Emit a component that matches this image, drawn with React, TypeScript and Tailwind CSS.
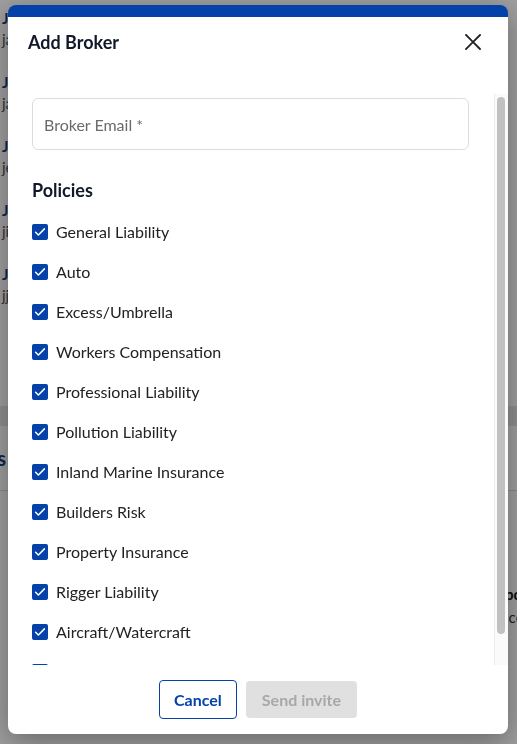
import { useState } from "react"

const policies = [
  "General Liability",
  "Auto",
  "Excess/Umbrella",
  "Workers Compensation",
  "Professional Liability",
  "Pollution Liability",
  "Inland Marine Insurance",
  "Builders Risk",
  "Property Insurance",
  "Rigger Liability",
  "Aircraft/Watercraft",
  "Other",
]

const contacts = [
  { name: "Jane Cooper", email: "jane@acme.com" },
  { name: "Jacob Jones", email: "jacob@acme.com" },
  { name: "Jenny Wilson", email: "jenny@acme.com" },
  { name: "Jim Parker", email: "jim@acme.com" },
  { name: "Jill Adams", email: "jjill@acme.com" },
]

function Check() {
  return (
    <svg width="16" height="16" viewBox="0 0 16 16" fill="none">
      <path d="M3.6 8.3l2.8 2.7 6-6.1" stroke="white" strokeWidth="1.5" strokeLinecap="round" strokeLinejoin="round" />
    </svg>
  )
}

export default function App() {
  const [checked, setChecked] = useState<boolean[]>(policies.map(() => true))

  return (
    <div className="relative min-h-screen h-[744px] overflow-hidden bg-white font-['Lato',sans-serif]">
      {/* Page behind the modal */}
      <div className="flex flex-col pl-[2px] pt-[8px]">
        {contacts.map((c) => (
          <div key={c.name} className="h-[64px] flex flex-col">
            <span className="text-[15px] font-bold text-[#1e3a8a] leading-[20px]">{c.name}</span>
            <span className="text-[15px] text-[#555] leading-[22px]">{c.email}</span>
          </div>
        ))}
      </div>
      <div className="mt-[78px] h-[20px] bg-[#e6e6e6]" />
      <div className="h-[65px] flex items-center border-b border-[#ddd]">
        <div className="w-[6px] overflow-hidden flex justify-end">
          <span className="text-[20px] font-bold text-[#1e3a8a] whitespace-nowrap">Brokers</span>
        </div>
      </div>
      <div className="flex justify-end pt-[92px]">
        <div className="w-[12px] overflow-hidden flex flex-col">
          <span className="text-[15px] font-bold text-[#111] whitespace-nowrap">policy</span>
          <span className="text-[15px] text-[#333] whitespace-nowrap">icons</span>
        </div>
      </div>

      {/* Overlay */}
      <div className="fixed inset-0 bg-black/[0.38]">
        <div className="absolute left-[8px] top-[5px] w-[500px] h-[729px] flex flex-col bg-white rounded-lg overflow-hidden border-t-[12px] border-[#0442a9] shadow-[0_8px_30px_rgba(0,0,0,0.35)]">
          {/* Header */}
          <div className="flex items-center justify-between pl-5 pr-[26px] pt-[13px] pb-[40px]">
            <h2 className="text-[18px] leading-[24px] font-bold text-[#111827]">Add Broker</h2>
            <button className="w-[18px] h-[18px] flex items-center justify-center text-[#222]">
              <svg width="16" height="16" viewBox="0 0 16 16" fill="none">
                <path d="M1 1l14 14M15 1L1 15" stroke="currentColor" strokeWidth="1.9" strokeLinecap="square" />
              </svg>
            </button>
          </div>

          {/* Body with scrollbar */}
          <div className="flex-1 min-h-0 flex">
            <div className="flex-1 min-w-0 overflow-hidden pl-6 pr-[25px] pt-1">
              <input
                placeholder="Broker Email *"
                className="w-full h-[52px] rounded-md border border-[#dcdcdc] pl-[11px] pr-3 text-[16px] text-[#333] placeholder:text-[#6b6b6b] outline-none"
              />
              <h3 className="mt-[28px] text-[18px] leading-[24px] font-bold text-[#111827]">Policies</h3>
              <div className="mt-[10px] flex flex-col">
                {policies.map((p, i) => (
                  <label key={p} className="h-[40px] flex items-center gap-2 cursor-pointer">
                    <span
                      onClick={() => setChecked(checked.map((v, j) => (j === i ? !v : v)))}
                      className={
                        checked[i]
                          ? "w-4 h-4 shrink-0 rounded-[2px] bg-[#0442a9] flex items-center justify-center"
                          : "w-4 h-4 shrink-0 rounded-[2px] border-2 border-[#0442a9]"
                      }
                    >
                      {checked[i] && <Check />}
                    </span>
                    <span className="text-[16px] text-[#222]">{p}</span>
                  </label>
                ))}
              </div>
            </div>
            <div className="w-[14px] shrink-0 bg-[#fafafa] border-l border-[#ebebeb] pt-[3px] pl-[2px] pr-[3px]">
              <div className="h-[537px] rounded-full bg-[#c1c1c1]" />
            </div>
          </div>

          {/* Footer */}
          <div className="flex justify-center gap-[9px] pt-[15px] pb-[15px]">
            <button className="h-[39px] px-[14px] rounded border border-[#0442a9] text-[16px] font-bold text-[#0442a9]">
              Cancel
            </button>
            <button disabled className="h-[37px] mt-px px-4 rounded bg-[#e0e0e0] text-[16px] font-bold text-[#a8a8a8]">
              Send invite
            </button>
          </div>
        </div>
      </div>
    </div>
  )
}
